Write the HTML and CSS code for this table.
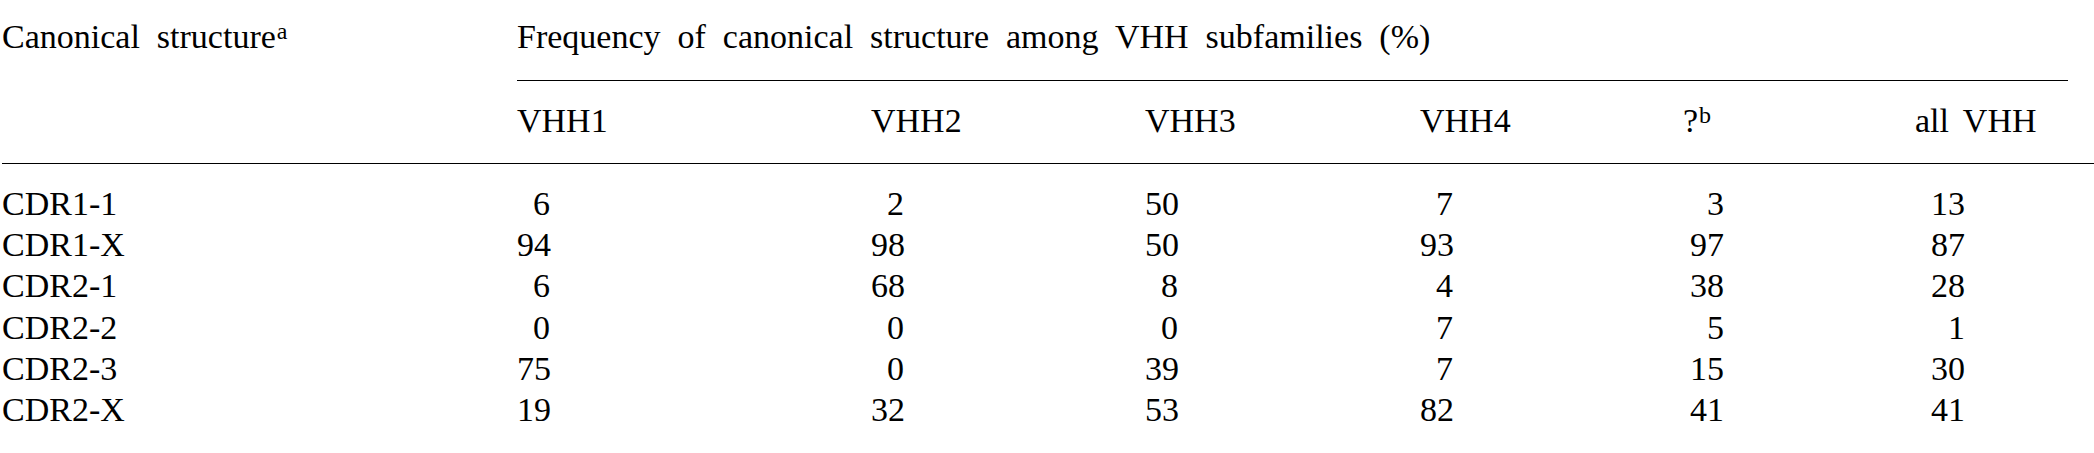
FILE: index.html
```html
<!DOCTYPE html>
<html lang="en">
<head>
<meta charset="utf-8">
<title>Canonical structure frequency</title>
<link rel="stylesheet" href="styles.css">
</head>
<body>
<table class="tbl">
  <colgroup>
    <col class="c0"><col class="c1"><col class="c2"><col class="c3"><col class="c4"><col class="c5"><col class="c6">
  </colgroup>
  <thead>
    <tr class="h1">
      <th class="stub" rowspan="2">Canonical structure<sup>a</sup></th>
      <th class="group" colspan="6"><div class="group-rule">Frequency of canonical structure among VHH subfamilies (%)</div></th>
    </tr>
    <tr class="h2">
      <th>VHH1</th>
      <th>VHH2</th>
      <th>VHH3</th>
      <th>VHH4</th>
      <th>?<sup>b</sup></th>
      <th>all VHH</th>
    </tr>
  </thead>
  <tbody>
    <tr><td>CDR1-1</td><td><span class="num">6</span></td><td><span class="num">2</span></td><td><span class="num">50</span></td><td><span class="num">7</span></td><td><span class="num">3</span></td><td><span class="num">13</span></td></tr>
    <tr><td>CDR1-X</td><td><span class="num">94</span></td><td><span class="num">98</span></td><td><span class="num">50</span></td><td><span class="num">93</span></td><td><span class="num">97</span></td><td><span class="num">87</span></td></tr>
    <tr><td>CDR2-1</td><td><span class="num">6</span></td><td><span class="num">68</span></td><td><span class="num">8</span></td><td><span class="num">4</span></td><td><span class="num">38</span></td><td><span class="num">28</span></td></tr>
    <tr><td>CDR2-2</td><td><span class="num">0</span></td><td><span class="num">0</span></td><td><span class="num">0</span></td><td><span class="num">7</span></td><td><span class="num">5</span></td><td><span class="num">1</span></td></tr>
    <tr><td>CDR2-3</td><td><span class="num">75</span></td><td><span class="num">0</span></td><td><span class="num">39</span></td><td><span class="num">7</span></td><td><span class="num">15</span></td><td><span class="num">30</span></td></tr>
    <tr><td>CDR2-X</td><td><span class="num">19</span></td><td><span class="num">32</span></td><td><span class="num">53</span></td><td><span class="num">82</span></td><td><span class="num">41</span></td><td><span class="num">41</span></td></tr>
  </tbody>
</table>
</body>
</html>
```
FILE: styles.css
```css
html, body {
  margin: 0;
  padding: 0;
  background: #fff;
}

body {
  color: #000;
  font-family: "Liberation Serif", "Times New Roman", serif;
  font-size: 34px;
}

.tbl {
  margin-left: 2px;
  width: 2092px;
  table-layout: fixed;
  border-collapse: separate;
  border-spacing: 0;
}

.c0 { width: 515px; }
.c1 { width: 354px; }
.c2 { width: 274px; }
.c3 { width: 275px; }
.c4 { width: 263px; }
.c5 { width: 232px; }
.c6 { width: 179px; }

th, td {
  padding: 0;
  text-align: left;
  font-weight: normal;
  white-space: nowrap;
}

.h1 th {
  line-height: 40px;
  padding-top: 16.5px;
  word-spacing: 8.5px;
  vertical-align: top;
}

.h1 .stub {
  border-bottom: 1px solid #000;
}

.h1 .group {
  padding-bottom: 0;
}

.group-rule {
  margin-right: 26px;
  padding-bottom: 23.5px;
  border-bottom: 1px solid #000;
}

.h2 th {
  line-height: 40px;
  padding-top: 19.5px;
  padding-bottom: 22.5px;
  word-spacing: 6px;
  border-bottom: 1px solid #000;
}

sup {
  font-size: 24px;
  line-height: 0;
  vertical-align: 9px;
  margin-left: 1px;
}

tbody td {
  line-height: 41.2px;
}

tbody tr:first-child td {
  padding-top: 19px;
}

.num {
  display: inline-block;
  width: 33px;
  text-align: right;
}

tbody td:nth-child(6) .num { width: 41px; }
tbody td:nth-child(7) .num { width: 50px; }
```
